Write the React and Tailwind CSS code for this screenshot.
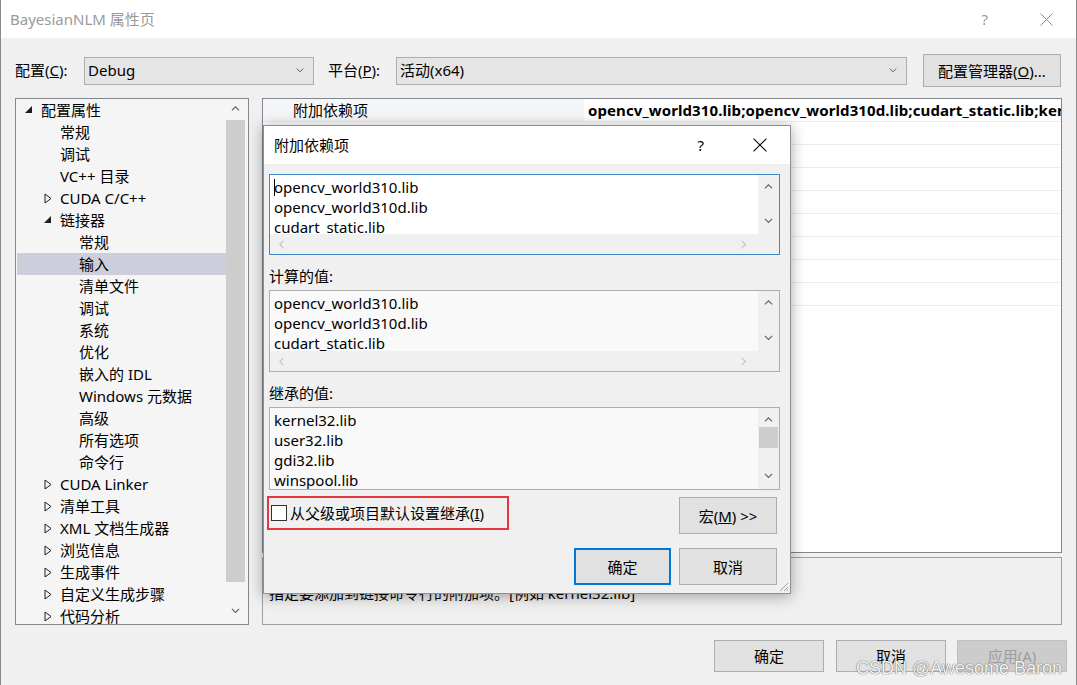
import React from 'react';

const TREE = [
  { t: '配置属性', lvl: 0, arrow: 'open' },
  { t: '常规', lvl: 1 },
  { t: '调试', lvl: 1 },
  { t: 'VC++ 目录', lvl: 1 },
  { t: 'CUDA C/C++', lvl: 1, arrow: 'closed' },
  { t: '链接器', lvl: 1, arrow: 'open' },
  { t: '常规', lvl: 2 },
  { t: '输入', lvl: 2, sel: true },
  { t: '清单文件', lvl: 2 },
  { t: '调试', lvl: 2 },
  { t: '系统', lvl: 2 },
  { t: '优化', lvl: 2 },
  { t: '嵌入的 IDL', lvl: 2 },
  { t: 'Windows 元数据', lvl: 2 },
  { t: '高级', lvl: 2 },
  { t: '所有选项', lvl: 2 },
  { t: '命令行', lvl: 2 },
  { t: 'CUDA Linker', lvl: 1, arrow: 'closed' },
  { t: '清单工具', lvl: 1, arrow: 'closed' },
  { t: 'XML 文档生成器', lvl: 1, arrow: 'closed' },
  { t: '浏览信息', lvl: 1, arrow: 'closed' },
  { t: '生成事件', lvl: 1, arrow: 'closed' },
  { t: '自定义生成步骤', lvl: 1, arrow: 'closed' },
  { t: '代码分析', lvl: 1, arrow: 'closed' },
];

const PAD = ['pl-[9px]', 'pl-[28px]', 'pl-[47px]'];

function Chevron({ dir = 'down', color = '#606060', size = 9 }) {
  const d = {
    up: 'M1 6 L5 2 L9 6',
    down: 'M1 2 L5 6 L9 2',
    left: 'M6 1 L2 5 L6 9',
    right: 'M2 1 L6 5 L2 9',
  }[dir];
  return (
    <svg width={size} height={size} viewBox="0 0 10 10" fill="none">
      <path d={d} stroke={color} strokeWidth="1.2" />
    </svg>
  );
}

function Cross({ color = '#000', size = 13 }) {
  return (
    <svg width={size} height={size} viewBox="0 0 13 13">
      <path d="M0.5 0.5 L12.5 12.5 M12.5 0.5 L0.5 12.5" stroke={color} strokeWidth="1" />
    </svg>
  );
}

function Arrow({ kind }) {
  if (kind === 'open')
    return (
      <svg width="8" height="8" viewBox="0 0 8 8">
        <polygon points="7,0 7,7 0,7" fill="#1e1e1e" />
      </svg>
    );
  if (kind === 'closed')
    return (
      <svg width="8" height="11" viewBox="0 0 8 11">
        <polygon points="1,1 7,5.5 1,10" fill="none" stroke="#1e1e1e" strokeWidth="1" />
      </svg>
    );
  return null;
}

function WinButton({ children, className = '' }) {
  return (
    <div className={`flex items-center justify-center bg-[#e1e1e1] border border-[#adadad] shrink-0 ${className}`}>
      {children}
    </div>
  );
}

function ListBox({ lines, bg, hscroll, focus, thumb, height, textH }) {
  return (
    <div className={`flex flex-col border ${focus ? 'border-[#3f88c5]' : 'border-[#adadad]'} ${height}`}>
      <div className={`flex ${textH}`}>
        <div className={`flex-1 overflow-hidden pl-[4px] pt-[2px] leading-[20px] ${bg}`}>
          {lines.map((l, i) => (
            <div key={i} className="relative whitespace-nowrap">
              {focus && i === 0 && <span className="absolute left-0 top-[2px] h-[17px] w-px bg-black" />}
              {l}
            </div>
          ))}
        </div>
        <div className="w-[21px] bg-[#f0f0f0] flex flex-col items-center justify-between py-[8px]">
          <Chevron dir="up" />
          {thumb && <div className="w-[19px] h-[21px] bg-[#cdcdcd] mb-auto mt-[2px]" />}
          <Chevron dir="down" />
        </div>
      </div>
      {hscroll && (
        <div className="h-[20px] bg-[#f0f0f0] flex items-center justify-between pl-[8px] pr-[30px]">
          <Chevron dir="left" color="#c2c2c2" />
          <Chevron dir="right" color="#c2c2c2" />
        </div>
      )}
    </div>
  );
}

export default function App() {
  const gridRows = Array.from({ length: 8 });
  return (
    <div className="relative w-[1077px] h-[685px] overflow-hidden bg-[#f0f0f0] border-x border-[#8a8a8a] font-['Noto_Sans','Noto_Sans_CJK_SC',sans-serif] text-[15px] text-black leading-[20px]">
      {/* title bar */}
      <div className="h-[38px] bg-white flex items-center pl-[9px]">
        <span className="text-[#9a9a9a] flex-1">BayesianNLM 属性页</span>
        <span className="text-[#9a9a9a] mr-[52px]">?</span>
        <span className="mr-[23px]"><Cross color="#8c8c8c" size={13} /></span>
      </div>

      {/* config row */}
      <div className="mt-[16px] h-[33px] flex items-center pl-[14px]">
        <span className="w-[69px] shrink-0 -mt-[2px]">配置(<u>C</u>):</span>
        <div className="w-[230px] shrink-0 h-[28px] border border-[#adadad] bg-[#e5e5e5] flex items-center justify-between pl-[3px] pr-[9px]">
          <span className="-mt-[2px]">Debug</span>
          <Chevron dir="down" color="#555" size={8} />
        </div>
        <span className="ml-[14px] w-[68px] shrink-0 -mt-[2px]">平台(<u>P</u>):</span>
        <div className="w-[511px] shrink-0 h-[28px] border border-[#adadad] bg-[#e5e5e5] flex items-center justify-between pl-[3px] pr-[9px]">
          <span className="-mt-[2px]">活动(x64)</span>
          <Chevron dir="down" color="#555" size={8} />
        </div>
        <WinButton className="ml-[16px] w-[138px] h-[33px]">
          配置管理器(<u>O</u>)...
        </WinButton>
      </div>

      {/* main */}
      <div className="mt-[11px] flex gap-[13px] px-[14px]">
        {/* tree */}
        <div className="w-[234px] shrink-0 h-[527px] border border-[#828790] bg-[#f5f5f5] flex overflow-hidden">
          <div className="flex-1 min-w-0 overflow-hidden">
            {TREE.map((r, i) => (
              <div
                key={i}
                className={`h-[22px] flex items-center ${PAD[r.lvl]} ${r.sel ? 'bg-[#cccedb] ml-px' : ''}`}
              >
                <span className={`w-[16px] shrink-0 flex items-center ${r.sel ? '-ml-px' : ''}`}>
                  <Arrow kind={r.arrow} />
                </span>
                <span className="whitespace-nowrap">{r.t}</span>
              </div>
            ))}
          </div>
          <div className="w-[19px] shrink-0 mr-[3px] flex flex-col">
            <div className="h-[21px] flex items-center justify-center">
              <Chevron dir="up" />
            </div>
            <div className="h-[462px] bg-[#cdcdcd]" />
            <div className="flex-1 flex items-end justify-center pb-[8px]">
              <Chevron dir="down" />
            </div>
          </div>
        </div>

        {/* right column */}
        <div className="flex-1 min-w-0 flex flex-col gap-[4px]">
          <div className="h-[455px] border border-[#828790] bg-white overflow-hidden">
            <div className="h-[23px] flex border-b border-[#ededed]">
              <div className="w-[321px] shrink-0 bg-[#f5f6f8] pl-[30px] flex items-center">附加依赖项</div>
              <div className="flex-1 min-w-0 pl-[4px] flex items-center font-bold whitespace-nowrap overflow-hidden text-[15px] tracking-[0.1px]">
                opencv_world310.lib;opencv_world310d.lib;cudart_static.lib;kernel32.lib;user32.lib
              </div>
            </div>
            {gridRows.map((_, i) => (
              <div key={i} className="h-[23px] border-b border-[#ededed]" />
            ))}
          </div>
          <div className="h-[68px] border border-[#a0a0a0] bg-[#f0f0f0] pl-[6px] pt-[4px]">
            <div className="font-bold">附加依赖项</div>
            <div className="mt-[1px]">指定要添加到链接命令行的附加项。[例如 kernel32.lib]</div>
          </div>
        </div>
      </div>

      {/* bottom buttons */}
      <div className="mt-[15px] flex justify-end gap-[12px] pr-[9px]">
        <WinButton className="w-[110px] h-[32px]">确定</WinButton>
        <WinButton className="w-[110px] h-[32px]">取消</WinButton>
        <div className="w-[110px] h-[32px] flex items-center justify-center bg-[#cccccc] border border-[#bfbfbf] text-[#9d9d9d] -ml-px">
          应用(A)
        </div>
      </div>

      {/* modal dialog */}
      <div className="absolute left-[262px] top-[125px] w-[528px] h-[469px] bg-[#f0f0f0] border border-[#8f8f8f] shadow-[0_2px_14px_rgba(0,0,0,0.35)] flex flex-col">
        <div className="h-[38px] bg-white flex items-center pl-[10px] shrink-0">
          <span className="flex-1">附加依赖项</span>
          <span className="mr-[49px]">?</span>
          <span className="mr-[23px]"><Cross size={14} /></span>
        </div>
        <div className="pl-[5px] pr-[10px] flex flex-col">
          <div className="mt-[10px]">
            <ListBox
              focus
              hscroll
              bg="bg-white"
              height="h-[81px]"
              textH="h-[59px]"
              lines={['opencv_world310.lib', 'opencv_world310d.lib', 'cudart_static.lib']}
            />
          </div>
          <div className="mt-[11px] h-[20px]">计算的值:</div>
          <div className="mt-[4px]">
            <ListBox
              hscroll
              bg="bg-[#f9f9f9]"
              height="h-[82px]"
              textH="h-[60px]"
              lines={['opencv_world310.lib', 'opencv_world310d.lib', 'cudart_static.lib']}
            />
          </div>
          <div className="mt-[11px] h-[20px]">继承的值:</div>
          <div className="mt-[4px]">
            <ListBox
              thumb
              bg="bg-[#f9f9f9]"
              height="h-[83px]"
              textH="h-[81px]"
              lines={['kernel32.lib', 'user32.lib', 'gdi32.lib', 'winspool.lib', 'comdlg32.lib']}
            />
          </div>
          <div className="mt-[6px] flex items-start justify-between pr-[3px]">
            <div className="-ml-[2px] w-[242px] h-[34px] border-2 border-[#e5373f] flex items-center pl-[2px]">
              <span className="w-[16px] h-[16px] shrink-0 border border-[#333] bg-white" />
              <span className="ml-[3px] whitespace-nowrap">从父级或项目默认设置继承(<u>I</u>)</span>
            </div>
            <WinButton className="w-[98px] h-[37px] mt-[1px]">
              宏(<u>M</u>) &gt;&gt;
            </WinButton>
          </div>
          <div className="mt-[14px] flex justify-end gap-[8px] pr-[3px]">
            <div className="w-[97px] h-[37px] flex items-center justify-center bg-[#e1e1e1] border-2 border-[#0078d7]">
              确定
            </div>
            <WinButton className="w-[98px] h-[37px]">取消</WinButton>
          </div>
        </div>
        <svg className="absolute right-[1px] bottom-[1px]" width="12" height="12" viewBox="0 0 12 12">
          <path d="M11 3 L3 11 M11 7 L7 11 M11 10 L10 11" stroke="#a0a0a0" strokeWidth="1" />
        </svg>
      </div>

      {/* watermark */}
      <div className="absolute right-[14px] top-[656px] text-[18px] leading-[24px] font-['Liberation_Sans',sans-serif] text-[#f4f4f4] [text-shadow:0_0_1px_#666,0_0_1px_#666]">
        CSDN @Awesome Baron
      </div>
    </div>
  );
}
